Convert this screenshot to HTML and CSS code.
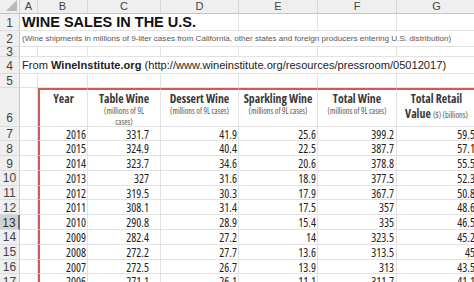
FILE: index.html
```html
<!DOCTYPE html>
<html>
<head>
<meta charset="utf-8">
<link rel="stylesheet" href="styles.css">
</head>
<body>
<div class="sheet">
  <!-- column header row -->
  <div class="corner"><svg width="11" height="11" viewBox="0 0 11 11"><polygon points="11,0 11,11 0,11" fill="#b9b9b9"/></svg></div>
  <div class="colhd">A</div>
  <div class="colhd">B</div>
  <div class="colhd">C</div>
  <div class="colhd">D</div>
  <div class="colhd">E</div>
  <div class="colhd">F</div>
  <div class="colhd">G</div>

  <!-- row 1 -->
  <div class="rowhd">1</div>
  <div class="cell span-ad title">WINE SALES IN THE U.S.</div>
  <div class="cell"></div><div class="cell"></div><div class="cell"></div>

  <!-- row 2 -->
  <div class="rowhd">2</div>
  <div class="cell span-ag note">(Wine shipments in millions of 9-liter cases from California, other states and foreign producers entering U.S. distribution)</div>

  <!-- row 3 -->
  <div class="rowhd">3</div>
  <div class="cell"></div><div class="cell"></div><div class="cell"></div><div class="cell"></div><div class="cell"></div><div class="cell"></div><div class="cell"></div>

  <!-- row 4 -->
  <div class="rowhd">4</div>
  <div class="cell span-ag source">From <b>WineInstitute.org</b> (http://www.wineinstitute.org/resources/pressroom/05012017)</div>

  <!-- row 5 -->
  <div class="rowhd">5</div>
  <div class="cell"></div><div class="cell"></div><div class="cell"></div><div class="cell"></div><div class="cell"></div><div class="cell"></div><div class="cell"></div>

  <!-- row 6: table header -->
  <div class="rowhd tall">6</div>
  <div class="cell"></div>
  <div class="cell th rl rt"><div class="h1">Year</div></div>
  <div class="cell th rt"><div class="h1">Table Wine</div><div class="h2">(millions of 9L</div><div class="h2">cases)</div></div>
  <div class="cell th rt"><div class="h1">Dessert Wine</div><div class="h2">(millions of 9L cases)</div></div>
  <div class="cell th rt"><div class="h1">Sparkling Wine</div><div class="h2">(millions of 9L cases)</div></div>
  <div class="cell th rt"><div class="h1">Total Wine</div><div class="h2">(millions of 9L cases)</div></div>
  <div class="cell th rt"><div class="h1">Total Retail</div><div class="h3">Value <span class="sm">($) (billions)</span></div></div>

  <div class="rowhd">7</div><div class="cell"></div><div class="cell num rl">2016</div><div class="cell num c">331.7</div><div class="cell num">41.9</div><div class="cell num">25.6</div><div class="cell num f">399.2</div><div class="cell num">59.5</div>
  <div class="rowhd">8</div><div class="cell"></div><div class="cell num rl">2015</div><div class="cell num c">324.9</div><div class="cell num">40.4</div><div class="cell num">22.5</div><div class="cell num f">387.7</div><div class="cell num">57.1</div>
  <div class="rowhd">9</div><div class="cell"></div><div class="cell num rl">2014</div><div class="cell num c">323.7</div><div class="cell num">34.6</div><div class="cell num">20.6</div><div class="cell num f">378.8</div><div class="cell num">55.5</div>
  <div class="rowhd">10</div><div class="cell"></div><div class="cell num rl">2013</div><div class="cell num c">327</div><div class="cell num">31.6</div><div class="cell num">18.9</div><div class="cell num f">377.5</div><div class="cell num">52.3</div>
  <div class="rowhd">11</div><div class="cell"></div><div class="cell num rl">2012</div><div class="cell num c">319.5</div><div class="cell num">30.3</div><div class="cell num">17.9</div><div class="cell num f">367.7</div><div class="cell num">50.8</div>
  <div class="rowhd">12</div><div class="cell"></div><div class="cell num rl">2011</div><div class="cell num c">308.1</div><div class="cell num">31.4</div><div class="cell num">17.5</div><div class="cell num f">357</div><div class="cell num">48.6</div>
  <div class="rowhd sel">13</div><div class="cell"></div><div class="cell num rl">2010</div><div class="cell num c">290.8</div><div class="cell num">28.9</div><div class="cell num">15.4</div><div class="cell num f">335</div><div class="cell num">46.5</div>
  <div class="rowhd">14</div><div class="cell"></div><div class="cell num rl">2009</div><div class="cell num c">282.4</div><div class="cell num">27.2</div><div class="cell num">14</div><div class="cell num f">323.5</div><div class="cell num">45.2</div>
  <div class="rowhd">15</div><div class="cell"></div><div class="cell num rl">2008</div><div class="cell num c">272.2</div><div class="cell num">27.7</div><div class="cell num">13.6</div><div class="cell num f">313.5</div><div class="cell num">45</div>
  <div class="rowhd">16</div><div class="cell"></div><div class="cell num rl">2007</div><div class="cell num c">272.5</div><div class="cell num">26.7</div><div class="cell num">13.9</div><div class="cell num f">313</div><div class="cell num">43.5</div>
  <div class="rowhd">17</div><div class="cell"></div><div class="cell num rl">2006</div><div class="cell num c">271.1</div><div class="cell num">26.1</div><div class="cell num">11.1</div><div class="cell num f">311.7</div><div class="cell num">41.1</div>
</div>
</body>
</html>
```

FILE: styles.css
```css
* { box-sizing: border-box; }
html, body { margin: 0; padding: 0; background: #fff; }
body { width: 474px; height: 282px; overflow: hidden; }

.sheet {
  display: grid;
  grid-template-columns: 20px 18px 50px 73px 78px 79px 79px 80px;
  grid-template-rows: 14px 17px 16px 10px 17px 14px 38.5px repeat(11, 14.8px);
  width: 497px;
  font-family: "Liberation Sans", Arial, sans-serif;
}

.corner {
  background: #efefef;
  border-right: 1px solid #d0d0d0;
  border-bottom: 1px solid #c4c4c4;
  display: flex;
  align-items: flex-end;
  justify-content: flex-end;
  padding: 0 2px 2px 0;
}

.colhd {
  background: #efefef;
  border-right: 1px solid #d6d6d6;
  border-bottom: 1px solid #c4c4c4;
  color: #444;
  font-size: 11px;
  line-height: 13px;
  text-align: center;
}

.rowhd {
  background: #efefef;
  border-right: 1px solid #c9c9c9;
  border-bottom: 1px solid #dcdcdc;
  color: #444;
  font-size: 12px;
  display: flex;
  align-items: center;
  justify-content: center;
  padding-top: 1px;
}
.rowhd.tall { align-items: flex-end; padding-bottom: 1px; }
.rowhd.sel {
  background: #d2d2d2;
  border-right: 2px solid #5f7a6a;
  color: #333;
}

.cell {
  border-right: 1px solid #e2e2e2;
  border-bottom: 1px solid #e2e2e2;
  white-space: nowrap;
  overflow: visible;
}

.span-ad { grid-column: 2 / 6; }
.span-ag { grid-column: 2 / 9; }

.title {
  font-weight: bold;
  font-size: 14.5px;
  color: #111;
  padding-left: 2px;
  line-height: 17px;
}
.note {
  font-size: 8.1px;
  color: #555;
  padding-left: 2px;
  line-height: 15px;
}
.source {
  font-size: 11.1px;
  color: #222;
  padding-left: 2px;
  line-height: 17px;
}

.rt { border-top: 2px solid #cf5b55; }
.rl { border-left: 2px solid #cf5b55; }

.th {
  font-family: "Open Sans", "DejaVu Sans Condensed", sans-serif;
  font-stretch: 80%;
  text-align: center;
  color: #3a3a3a;
  padding-top: 1px;
}
.h1 { font-weight: bold; font-size: 11.8px; line-height: 14px; }
.h2 { font-size: 8.2px; font-stretch: 87%; line-height: 11px; color: #555; }
.h3 { font-weight: bold; font-size: 11.8px; line-height: 16px; }
.h3 .sm { font-weight: normal; font-size: 8.2px; font-stretch: 87%; color: #555; }

.num {
  font-family: "Open Sans", "DejaVu Sans Condensed", sans-serif;
  font-stretch: 84%;
  font-size: 11.8px;
  color: #1e1e1e;
  text-align: right;
  padding-right: 1px;
  line-height: 14px;
}
.num.c { padding-right: 11px; }
.num.f { padding-right: 2px; }
```
